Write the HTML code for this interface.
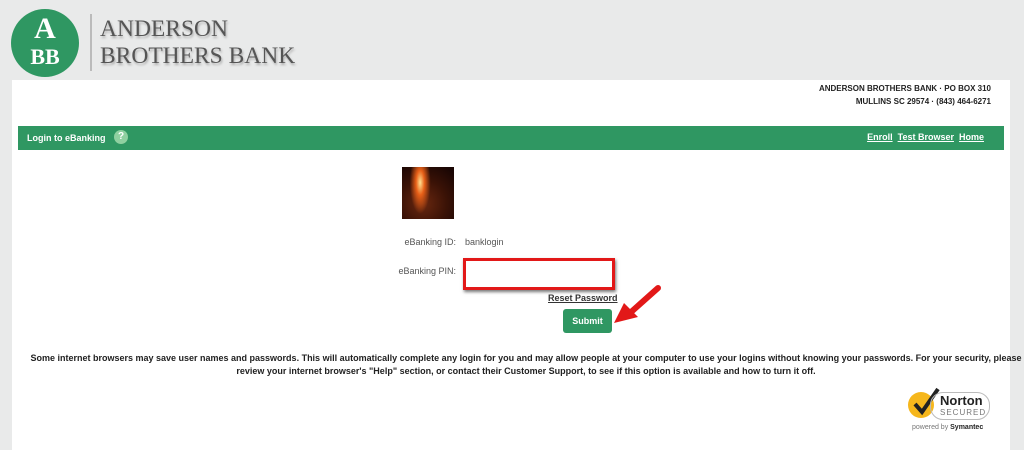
<!DOCTYPE html>
<html><head><style>
body{margin:0;width:1024px;height:450px;background:#e9eaea;font-family:"Liberation Sans",sans-serif;position:relative;overflow:hidden}
.a{position:absolute}
.panel{left:12px;top:80px;width:998px;height:370px;background:#fff}
.bar{left:18px;top:126px;width:986px;height:24px;background:#2f9762;color:#fff;font-size:9px;font-weight:bold}
.bar a{color:#fff;text-decoration:underline}
.lbl{font-size:9px;color:#555}
</style></head><body>
<div class="a" style="left:11px;top:9px;width:68px;height:68px;border-radius:50%;background:#2f9762"></div>
<div class="a" style="left:11px;top:14px;width:68px;text-align:center;font-family:'Liberation Serif',serif;font-weight:bold;color:#fff;font-size:30px;line-height:30px">A</div>
<div class="a" style="left:11px;top:44px;width:68px;text-align:center;font-family:'Liberation Serif',serif;font-weight:bold;color:#fff;font-size:22px;line-height:26px">BB</div>
<div class="a" style="left:90px;top:14px;width:2px;height:57px;background:#bbb"></div>
<div class="a" style="left:100px;top:16px;font-family:'Liberation Serif',serif;color:#555;font-size:23.5px;line-height:27px;text-shadow:1px 2px 2px #aaa">ANDERSON<br>BROTHERS BANK</div>
<div class="a panel"></div>
<div class="a" style="right:33px;top:82px;text-align:right;font-size:8px;font-weight:bold;color:#222;line-height:13px">ANDERSON BROTHERS BANK · PO BOX 310<br>MULLINS SC 29574 · (843) 464-6271</div>
<div class="a bar"><span class="a" style="left:9px;top:7px">Login to eBanking</span>
<span class="a" style="left:96px;top:4px;width:14px;height:14px;border-radius:50%;background:#8fd0a0;color:#fff;text-align:center;line-height:14px;font-size:10px">?</span>
<span class="a" style="right:20px;top:6px"><a>Enroll</a>&nbsp; <a>Test Browser</a>&nbsp; <a>Home</a></span></div>
<div class="a" style="left:402px;top:167px;width:52px;height:52px;background:radial-gradient(ellipse 20% 60% at 35% 30%,#ffe090 0,#e86018 40%,transparent 100%),radial-gradient(circle at 40% 70%,#6a2810 0,#3a1206 50%,#1a0604 90%)"></div>
<div class="a lbl" style="left:402px;top:237px;width:54px;text-align:right">eBanking ID:</div>
<div class="a lbl" style="left:465px;top:237px">banklogin</div>
<div class="a lbl" style="left:380px;top:266px;width:76px;text-align:right">eBanking PIN:</div>
<div class="a" style="left:463px;top:258px;width:146px;height:26px;border:3px solid #e21818;box-shadow:1px 2px 3px #777;background:#fff"></div>
<div class="a" style="left:548px;top:293px;font-size:9px;font-weight:bold;color:#333;text-decoration:underline">Reset Password</div>
<div class="a" style="left:563px;top:309px;width:49px;height:24px;background:#2f9762;border-radius:3px;color:#fff;font-size:9px;font-weight:bold;text-align:center;line-height:24px">Submit</div>
<svg class="a" style="left:610px;top:283px" width="52" height="46"><path d="M48 5 L20 30" stroke="#e21818" stroke-width="6" stroke-linecap="round"/><path d="M4 40 L14 20 L28 34 Z" fill="#e21818"/></svg>
<div class="a" style="left:28px;top:352px;width:996px;text-align:center;font-size:9px;font-weight:bold;color:#222;line-height:13px">Some internet browsers may save user names and passwords. This will automatically complete any login for you and may allow people at your computer to use your logins without knowing your passwords. For your security, please<br>review your internet browser's "Help" section, or contact their Customer Support, to see if this option is available and how to turn it off.</div>
<div class="a" style="left:908px;top:392px;width:26px;height:26px;border-radius:50%;background:#f6b71c"></div>
<svg class="a" style="left:908px;top:386px" width="34" height="32"><path d="M7 18 L14 26 L30 3" stroke="#222" stroke-width="4" fill="none"/></svg>
<div class="a" style="left:930px;top:392px;width:58px;height:26px;border:1px solid #bbb;border-radius:13px"></div>
<div class="a" style="left:940px;top:393px;font-size:13px;font-weight:bold;color:#222">Norton</div>
<div class="a" style="left:940px;top:408px;font-size:8px;color:#777;letter-spacing:1px">SECURED</div>
<div class="a" style="left:912px;top:424px;font-size:7px;color:#777">powered by <b style="color:#222">Symantec</b></div>
</body></html>
